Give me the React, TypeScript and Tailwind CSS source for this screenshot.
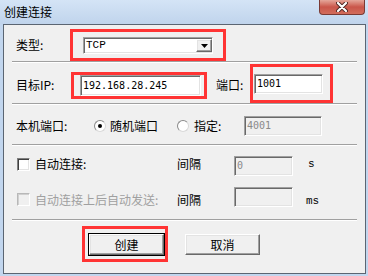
const sunken =
  'border border-t-[#a0a0a0] border-l-[#a0a0a0] border-b-white border-r-white shadow-[inset_1px_1px_0_#696969,inset_-1px_-1px_0_#e3e3e3]';
const raised =
  'border border-t-white border-l-white border-b-[#696969] border-r-[#696969] shadow-[inset_-1px_-1px_0_#a0a0a0,inset_1px_1px_0_#e3e3e3] bg-[#f0f0f0]';
const mono = "font-['DejaVu_Sans_Mono',monospace] text-[10px]";
const unit = "font-['Liberation_Mono',monospace] text-[11px] text-black";

function Separator() {
  return <div className="mx-[8px] h-[2px] border-t border-b border-t-[#a0a0a0] border-b-white" />;
}

function Field({ value, disabled, w, h }: { value?: string; disabled?: boolean; w: string; h: string }) {
  return (
    <div
      className={`${sunken} ${w} ${h} flex items-center pl-[2px] ${mono} ${
        disabled ? 'bg-[#f0f0f0] text-[#8a8a8a]' : 'bg-white text-black'
      }`}
    >
      {value}
    </div>
  );
}

function Radio({ checked }: { checked?: boolean }) {
  return (
    <div className="w-[12px] h-[12px] rounded-full border border-t-[#8a8a8a] border-l-[#8a8a8a] border-b-[#d8d8d8] border-r-[#d8d8d8] bg-white flex items-center justify-center">
      {checked && <div className="w-[4px] h-[4px] rounded-full bg-black" />}
    </div>
  );
}

function Checkbox({ disabled }: { disabled?: boolean }) {
  return (
    <div
      className={`w-[13px] h-[13px] border ${
        disabled
          ? 'border-t-[#b8b8b8] border-l-[#b8b8b8] border-b-white border-r-white bg-[#f0f0f0] shadow-[inset_1px_1px_0_#d0d0d0]'
          : 'border-t-[#808080] border-l-[#808080] border-b-white border-r-white bg-white shadow-[inset_1px_1px_0_#404040,inset_-1px_-1px_0_#e3e3e3]'
      }`}
    />
  );
}

export default function App() {
  return (
    <div className="w-[368px] h-[276px] bg-[#c2d6ee] flex flex-col overflow-hidden text-[12px] leading-[16px] text-black font-['Noto_Sans_CJK_SC',sans-serif]">
      {/* title bar */}
      <div className="h-[24px] flex justify-between bg-linear-to-b from-[#d4e4f6] to-[#c0d4ec]">
        <div className="pl-[4px] pt-[4px] text-[12px]">创建连接</div>
        <div className="mr-[3px] w-[46px] h-[15px] rounded-b-[4px] border border-t-0 border-[#7a3a34] bg-linear-to-b from-[#e4a69a] via-[#c9554a] to-[#d26d5c] flex items-center justify-center">
          <svg width="12" height="10" viewBox="0 0 12 10">
            <path d="M2 1 L10 9 M10 1 L2 9" stroke="#4b2420" strokeWidth="4" strokeLinecap="round" />
            <path d="M2 1 L10 9 M10 1 L2 9" stroke="#ffffff" strokeWidth="2.2" strokeLinecap="round" />
          </svg>
        </div>
      </div>

      {/* client area */}
      <div className="ml-[3px] mr-[2px] mb-[2px] flex-1 border border-[#5b6572] bg-[#f0f0f0] flex flex-col">
        {/* type */}
        <div className="h-[36px] flex items-start pt-[4px] pl-[12px]">
          <div className="w-[54px] h-[32px] flex items-center">类型:</div>
          <div className="w-[156px] h-[32px] border-[3px] border-[#ff3434] pl-[10px] pt-[5px]">
            <div className={`${sunken} w-[130px] h-[17px] bg-white flex items-center`}>
              <div className="flex-1 pl-[2px] font-['Liberation_Mono',monospace] text-[11px] leading-[13px]">TCP</div>
              <div className={`${raised} w-[16px] h-[13px] flex items-center justify-center`}>
                <svg width="7" height="4" viewBox="0 0 7 4">
                  <path d="M0 0 H7 L3.5 4 Z" fill="#000" />
                </svg>
              </div>
            </div>
          </div>
        </div>
        <Separator />

        {/* target ip / port */}
        <div className="h-[40px] flex items-start pl-[12px]">
          <div className="w-[55px] mt-[14px]">目标IP:</div>
          <div className="mt-[9px] w-[136px] h-[27px] border-[3px] border-[#ff3434] pl-[6px] pr-[3px]">
            <Field value="192.168.28.245" w="w-[121px]" h="h-[21px]" />
          </div>
          <div className="ml-[9px] w-[34px] mt-[14px]">端口:</div>
          <div className="mt-[1px] w-[83px] h-[39px] border-[3px] border-[#ff3434] pl-[1px] pt-[7px]">
            <Field value="1001" w="w-[69px]" h="h-[20px]" />
          </div>
        </div>
        <Separator />

        {/* local port */}
        <div className="h-[39px] flex items-center pl-[12px] pt-[3px]">
          <div className="w-[78px]">本机端口:</div>
          <Radio checked />
          <div className="ml-[4px]">随机端口</div>
          <div className="ml-[19px]">
            <Radio />
          </div>
          <div className="ml-[5px] w-[50px]">指定:</div>
          <Field value="4001" disabled w="w-[78px]" h="h-[20px]" />
        </div>
        <Separator />

        {/* auto connect */}
        <div className="h-[35px] flex items-start pl-[13px]">
          <div className="mt-[12px]">
            <Checkbox />
          </div>
          <div className="ml-[5px] w-[142px] mt-[10px]">自动连接:</div>
          <div className="w-[57px] mt-[10px]">间隔</div>
          <div className="mt-[10px]">
            <Field value="0" disabled w="w-[59px]" h="h-[20px]" />
          </div>
          <div className={`ml-[15px] mt-[10px] ${unit}`}>s</div>
        </div>

        <div className="h-[38px] flex items-start pl-[13px]">
          <div className="mt-[12px]">
            <Checkbox disabled />
          </div>
          <div className="ml-[5px] w-[142px] mt-[11px] text-[#a0a0a0]">自动连接上后自动发送:</div>
          <div className="w-[57px] mt-[11px]">间隔</div>
          <div className="mt-[6px]">
            <Field disabled w="w-[59px]" h="h-[20px]" />
          </div>
          <div className={`ml-[13px] mt-[12px] ${unit}`}>ms</div>
        </div>
        <Separator />

        {/* buttons */}
        <div className="flex-1 flex items-start pt-[5px] pl-[78px]">
          <div className="w-[86px] h-[36px] border-[3px] border-[#ff3434] pl-[3px] pt-[4px]">
            <div className="w-[77px] h-[23px] border border-black">
              <div className={`${raised} w-full h-full flex items-center justify-center`}>创建</div>
            </div>
          </div>
          <div className={`${raised} ml-[17px] mt-[8px] w-[75px] h-[21px] flex items-center justify-center`}>
            取消
          </div>
        </div>
      </div>
    </div>
  );
}
